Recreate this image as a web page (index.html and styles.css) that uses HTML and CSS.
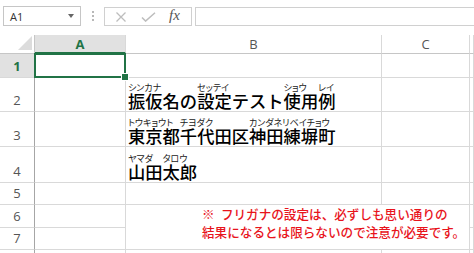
FILE: index.html
```html
<!DOCTYPE html>
<html lang="ja">
<head>
    <meta charset="UTF-8">
    <meta name="viewport" content="width=device-width, initial-scale=1.0">
    <title>フリガナの設定</title>
    <link rel="stylesheet" href="styles.css">
</head>
<body>
    <div class="toolbar">
        <div class="namebox">
            <span>A1</span>
            <svg class="caret" width="6" height="4" viewBox="0 0 6 4"><path d="M0 0h6L3 4z" fill="#666"/></svg>
        </div>
        <div class="grip"><i></i><i></i><i></i></div>
        <div class="fbuttons">
            <svg width="14" height="10" viewBox="0 0 14 10"><path d="M2.5 0.5l9 9M11.5 0.5l-9 9" stroke="#bdbdbd" stroke-width="1.3" fill="none"/></svg>
            <svg width="15" height="10" viewBox="0 0 15 10"><path d="M1 5.5l3.6 3.6L14 0.8" stroke="#bdbdbd" stroke-width="1.5" fill="none"/></svg>
            <span class="fx">fx</span>
        </div>
        <div class="fbar"></div>
    </div>

    <div class="sheet">
        <!-- header row -->
        <div class="cell corner"><span class="tri"></span></div>
        <div class="cell col-head active">A</div>
        <div class="cell col-head">B</div>
        <div class="cell col-head">C</div>
        <div class="cell col-head"></div>

        <!-- row 1 -->
        <div class="cell row-head active">1</div>
        <div class="cell sel"></div>
        <div class="cell"></div>
        <div class="cell"></div>
        <div class="cell"></div>

        <!-- row 2 -->
        <div class="cell row-head">2</div>
        <div class="cell"></div>
        <div class="cell txt">
            <span class="word"><span class="kana">シンカナ</span><span class="base">振仮名</span></span>
            <span class="word"><span class="kana"></span><span class="base">の</span></span>
            <span class="word"><span class="kana">セッテイ</span><span class="base">設定</span></span>
            <span class="word"><span class="kana"></span><span class="base">テスト</span></span>
            <span class="word"><span class="kana">ショウ</span><span class="base">使用</span></span>
            <span class="word"><span class="kana">レイ</span><span class="base">例</span></span>
        </div>
        <div class="cell"></div>
        <div class="cell"></div>

        <!-- row 3 -->
        <div class="cell row-head">3</div>
        <div class="cell"></div>
        <div class="cell txt">
            <span class="word"><span class="kana">トウキョウト</span><span class="base">東京都</span></span>
            <span class="word"><span class="kana">チヨダク</span><span class="base">千代田区</span></span>
            <span class="word"><span class="kana">カンダネリベイチョウ</span><span class="base">神田練塀町</span></span>
        </div>
        <div class="cell"></div>
        <div class="cell"></div>

        <!-- row 4 -->
        <div class="cell row-head">4</div>
        <div class="cell"></div>
        <div class="cell txt">
            <span class="word"><span class="kana">ヤマダ</span><span class="base">山田</span></span>
            <span class="word"><span class="kana">タロウ</span><span class="base">太郎</span></span>
        </div>
        <div class="cell"></div>
        <div class="cell"></div>

        <!-- row 5 -->
        <div class="cell row-head">5</div>
        <div class="cell"></div>
        <div class="cell"></div>
        <div class="cell"></div>
        <div class="cell"></div>

        <!-- rows 6-7, note merged over B:C -->
        <div class="cell row-head">6</div>
        <div class="cell"></div>
        <div class="cell note">
            <div>※&ensp;フリガナの設定は、必ずしも思い通りの</div>
            <div>結果になるとは限らないので注意が必要です。</div>
        </div>
        <div class="cell"></div>

        <div class="cell row-head">7</div>
        <div class="cell"></div>
        <div class="cell"></div>

        <!-- row 8 (only its top edge is in view) -->
        <div class="cell row-head"></div>
        <div class="cell"></div>
        <div class="cell"></div>
        <div class="cell"></div>
        <div class="cell"></div>
    </div>
</body>
</html>
```

FILE: styles.css
```css
* {
    box-sizing: border-box;
}

body {
    margin: 0;
    width: 474px;
    height: 253px;
    overflow: hidden;
    background: #fff;
    font-family: "Open Sans", "Noto Sans", sans-serif;
    color: #444;
}

/* formula bar */
.toolbar {
    display: flex;
    align-items: flex-start;
    height: 35px;
    padding-top: 6px;
}

.namebox {
    display: flex;
    align-items: center;
    justify-content: space-between;
    margin-left: 3px;
    width: 78px;
    height: 20px;
    padding: 0 6px 0 6px;
    border: 1px solid #c6c6c6;
    font-size: 11px;
    color: #333;
}

.grip {
    display: flex;
    flex-direction: column;
    align-items: center;
    justify-content: center;
    gap: 2px;
    width: 23px;
    height: 20px;
}

.grip i {
    width: 2px;
    height: 2px;
    background: #b8b8b8;
}

.fbuttons {
    display: flex;
    align-items: center;
    gap: 13px;
    width: 88px;
    height: 19px;
    margin-top: 1px;
    padding-left: 9px;
    border: 1px solid #d0d0d0;
}

.fx {
    font-family: "Liberation Serif", serif;
    font-style: italic;
    font-size: 15px;
    color: #555;
    margin-top: -2px;
}

.fbar {
    flex: 1;
    height: 19px;
    margin-top: 1px;
    margin-left: 3px;
    border: 1px solid #d0d0d0;
    border-right: none;
}

/* sheet grid */
.sheet {
    display: grid;
    grid-template-columns: 35px 91px 256px 88px 1fr;
    grid-template-rows: 19px 24px 34px 35px 36px 22px 23px 22px 22px;
}

.cell {
    border-right: 1px solid #d9d9d9;
    border-bottom: 1px solid #d9d9d9;
}

.corner {
    display: flex;
    justify-content: flex-end;
    align-items: flex-end;
    padding: 0 2px 3px 0;
    border-right-color: #c6c6c6;
    border-bottom-color: #c6c6c6;
}

.tri {
    width: 0;
    height: 0;
    border-left: 14px solid transparent;
    border-bottom: 14px solid #dcdcdc;
}

.col-head {
    display: flex;
    align-items: center;
    justify-content: center;
    font-size: 13px;
    color: #555;
    border-bottom-color: #c6c6c6;
}

.col-head.active {
    background: #e1e1e1;
    color: #217346;
    font-weight: bold;
    border-bottom: 2px solid #217346;
    padding-top: 1px;
}

.row-head {
    display: flex;
    align-items: flex-end;
    justify-content: center;
    padding-bottom: 2px;
    font-size: 13px;
    color: #555;
    border-right-color: #a6a6a6;
}

.row-head.active {
    background: #e1e1e1;
    color: #217346;
    font-weight: bold;
}

.sel {
    position: relative;
}

.sel::after {
    content: "";
    position: absolute;
    left: -1px;
    top: -1px;
    right: -1px;
    bottom: -1px;
    border: 2px solid #217346;
}

.sel::before {
    content: "";
    position: absolute;
    right: -4px;
    bottom: -4px;
    width: 6px;
    height: 6px;
    background: #217346;
    border: 1px solid #fff;
    z-index: 1;
}

/* cells with furigana */
.txt {
    display: flex;
    align-items: flex-end;
    padding-left: 2px;
    font-family: "Noto Sans CJK JP", sans-serif;
    color: #000;
}

.word {
    display: inline-flex;
    flex-direction: column;
}

.kana {
    width: 0;
    height: 10px;
    margin-bottom: -2px;
    font-size: 9px;
    line-height: 10px;
    font-feature-settings: "palt";
    white-space: nowrap;
    color: #222;
}

.base {
    font-size: 17.3px;
    font-weight: 500;
    line-height: 20px;
    white-space: nowrap;
}

/* merged note B6:C7 */
.note {
    grid-column: 3 / 5;
    grid-row: span 2;
    padding-left: 76px;
    font-family: "Noto Sans CJK JP", sans-serif;
    font-size: 12.6px;
    font-weight: 500;
    line-height: 18px;
    color: #e8141c;
    white-space: nowrap;
}
```
